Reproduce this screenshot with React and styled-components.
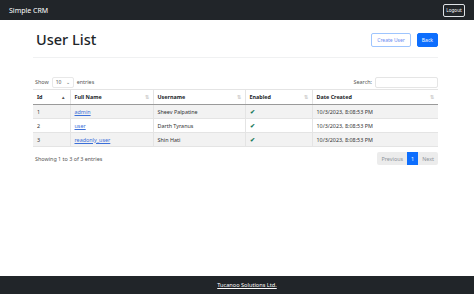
import React from "react";
import styled, { createGlobalStyle } from "styled-components";

const Global = createGlobalStyle`
  html, body { margin: 0; padding: 0; }
  body { font-family: "Noto Sans", "Open Sans", sans-serif; color: #212529; background: #fff; }
  * { box-sizing: border-box; }
`;

const Page = styled.div`
  display: flex;
  flex-direction: column;
  min-height: 294px;
`;

const NavBar = styled.nav`
  height: 20px;
  background: #212529;
  display: flex;
  align-items: center;
  justify-content: space-between;
  padding: 0 9px 0 9px;
`;

const Brand = styled.span`
  color: #fff;
  font-size: 7px;
`;

const LogoutBtn = styled.button`
  font-family: inherit;
  font-size: 4.6px;
  color: #fff;
  background: transparent;
  border: 1px solid #dee2e6;
  border-radius: 2px;
  height: 13px;
  width: 22px;
  padding: 0;
  display: flex;
  align-items: center;
  justify-content: center;
`;

const Main = styled.main`
  flex: 1;
  padding: 0 36px 0 33px;
`;

const HeaderRow = styled.div`
  display: flex;
  justify-content: space-between;
  align-items: center;
  padding: 9px 0 8px 3px;
  border-bottom: 1px solid #f0f1f2;
`;

const Title = styled.h1`
  margin: 0;
  font-size: 14.5px;
  font-weight: 500;
  line-height: 20px;
`;

const BtnGroup = styled.div`
  display: flex;
  gap: 6px;
  margin-top: 1px;
`;

const Btn = styled.button`
  font-family: inherit;
  font-size: 5px;
  height: 14px;
  padding: 0 ${(p) => (p.$outline ? 5 : 4)}px;
  border-radius: 2px;
  border: 1px solid ${(p) => (p.$outline ? "#9ec5fe" : "#0d6efd")};
  background: ${(p) => (p.$outline ? "#fff" : "#0d6efd")};
  color: ${(p) => (p.$outline ? "#6c8cf0" : "#fff")};
`;

const Controls = styled.div`
  display: flex;
  justify-content: space-between;
  align-items: center;
  margin-top: 18px;
  padding-left: 2px;
  font-size: 5.4px;
  color: #555;
  height: 12px;
`;

const Inline = styled.label`
  display: flex;
  align-items: center;
  gap: 3px;
`;

const Select = styled.div`
  width: 22px;
  height: 11px;
  border: 1px solid #e8e8e8;
  border-radius: 2px;
  display: flex;
  align-items: center;
  justify-content: space-between;
  padding: 0 3px;
  font-size: 5px;
`;

const SearchBox = styled.div`
  width: 63px;
  height: 11px;
  border: 1px solid #e5e5e5;
  border-radius: 2px;
  background: #fff;
`;

const Table = styled.table`
  margin-top: 1px;
  width: 100%;
  border-collapse: collapse;
  font-size: 5.4px;
`;

const Th = styled.th`
  text-align: left;
  font-weight: 700;
  height: 15px;
  padding: 0 4px;
  border-top: 1px solid #e4e4e4;
  border-bottom: 1px solid #9a9a9a;
  border-left: ${(p) => (p.$first ? "none" : "1px solid #e4e4e4")};
  width: ${(p) => p.$w}px;
  color: #212529;
`;

const ThInner = styled.div`
  display: flex;
  justify-content: space-between;
  align-items: center;
`;

const Sort = styled.span`
  color: ${(p) => (p.$active ? "#555" : "#ccc")};
  font-size: 4.5px;
`;

const Tr = styled.tr`
  background: ${(p) => (p.$striped ? "#f2f2f2" : "#fff")};
`;

const Td = styled.td`
  height: 14px;
  padding: 0 4px;
  border-bottom: 1px solid #e4e4e4;
  border-left: ${(p) => (p.$first ? "none" : "1px solid #e4e4e4")};
  color: #333;
`;

const Link = styled.a`
  color: #3b6fd9;
  text-decoration: underline;
`;

const Check = styled.span`
  color: #1c7a5a;
  font-size: 6px;
  font-weight: 700;
`;

const Bottom = styled.div`
  display: flex;
  justify-content: space-between;
  align-items: center;
  margin-top: 5px;
  padding-left: 2px;
  font-size: 5.4px;
  color: #555;
`;

const Pager = styled.div`
  display: flex;
  height: 13px;
`;

const PageItem = styled.span`
  display: flex;
  align-items: center;
  justify-content: center;
  padding: 0 ${(p) => p.$pad}px;
  background: ${(p) => (p.$active ? "#0d6efd" : "#ececec")};
  color: ${(p) => (p.$active ? "#fff" : "#8d949b")};
  border-radius: ${(p) => p.$radius || "0"};
`;

const Footer = styled.footer`
  height: 18px;
  background: #212529;
  display: flex;
  align-items: center;
  justify-content: center;
  padding-left: 20px;
`;

const FooterLink = styled.a`
  color: #fff;
  font-size: 5.6px;
  text-decoration: underline;
`;

const rows = [
  { id: 1, full: "admin", user: "Sheev Palpatine" },
  { id: 2, full: "user", user: "Darth Tyranus" },
  { id: 3, full: "readonly_user", user: "Shin Hati" },
];

export default function App() {
  return (
    <Page>
      <Global />
      <NavBar>
        <Brand>Simple CRM</Brand>
        <LogoutBtn>Logout</LogoutBtn>
      </NavBar>
      <Main>
        <HeaderRow>
          <Title>User List</Title>
          <BtnGroup>
            <Btn $outline>Create User</Btn>
            <Btn>Back</Btn>
          </BtnGroup>
        </HeaderRow>
        <Controls>
          <Inline>
            Show
            <Select>
              <span>10</span>
              <span>⌄</span>
            </Select>
            entries
          </Inline>
          <Inline>
            Search:
            <SearchBox />
          </Inline>
        </Controls>
        <Table>
          <thead>
            <tr>
              <Th $first $w={37}>
                <ThInner>Id<Sort $active>▲</Sort></ThInner>
              </Th>
              <Th $w={83}>
                <ThInner>Full Name<Sort>⇅</Sort></ThInner>
              </Th>
              <Th $w={92}>
                <ThInner>Username<Sort>⇅</Sort></ThInner>
              </Th>
              <Th $w={67}>
                <ThInner>Enabled<Sort>⇅</Sort></ThInner>
              </Th>
              <Th>
                <ThInner>Date Created<Sort>⇅</Sort></ThInner>
              </Th>
            </tr>
          </thead>
          <tbody>
            {rows.map((r, i) => (
              <Tr key={r.id} $striped={i % 2 === 0}>
                <Td $first>{r.id}</Td>
                <Td><Link>{r.full}</Link></Td>
                <Td>{r.user}</Td>
                <Td><Check>✔</Check></Td>
                <Td>10/3/2023, 8:08:53 PM</Td>
              </Tr>
            ))}
          </tbody>
        </Table>
        <Bottom>
          <span>Showing 1 to 3 of 3 entries</span>
          <Pager>
            <PageItem $pad={4} $radius="2px 0 0 2px">Previous</PageItem>
            <PageItem $pad={4} $active>1</PageItem>
            <PageItem $pad={4} $radius="0 2px 2px 0">Next</PageItem>
          </Pager>
        </Bottom>
      </Main>
      <Footer>
        <FooterLink>Tucanoo Solutions Ltd.</FooterLink>
      </Footer>
    </Page>
  );
}
